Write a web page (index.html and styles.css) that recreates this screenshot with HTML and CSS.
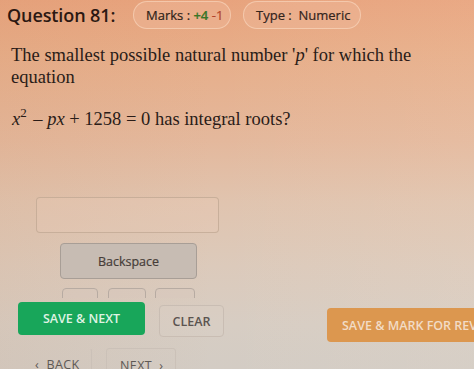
FILE: index.html
```html
<!DOCTYPE html>
<html lang="en">
<head>
<meta charset="utf-8">
<title>Question 81</title>
<link rel="stylesheet" href="styles.css">
</head>
<body>
<div class="page">
  <header class="header">
    <h1 class="title">Question 81:</h1>
    <div class="pill pill-marks"><span>Marks : <span class="plus">+4</span> <span class="minus">-1</span></span></div>
    <div class="pill pill-type"><span>Type :&nbsp; Numeric</span></div>
  </header>

  <section class="question">
    <p class="q-line">The smallest possible natural number '<i>p</i>' for which the equation</p>
    <p class="q-eq"><i>x</i><sup>2</sup> – <i>px</i> + 1258 = 0 has integral roots?</p>
  </section>

  <div class="answer"></div>
  <button class="backspace">Backspace</button>
  <div class="keys">
    <span class="key k1"></span>
    <span class="key k2"></span>
    <span class="key k3"></span>
  </div>

  <div class="actions">
    <button class="btn btn-save">SAVE &amp; NEXT</button>
    <button class="btn btn-clear">CLEAR</button>
    <button class="btn btn-mark">SAVE &amp; MARK FOR REVIEW</button>
  </div>

  <nav class="nav">
    <button class="nav-btn nav-back">&lsaquo;&nbsp; BACK</button>
    <button class="nav-btn nav-next">NEXT &nbsp;&rsaquo;</button>
  </nav>
</div>
</body>
</html>
```

FILE: styles.css
```css
* { box-sizing: border-box; }
html, body { margin: 0; padding: 0; }
body {
  width: 474px;
  height: 369px;
  overflow: hidden;
  font-family: "Open Sans", "Noto Sans", sans-serif;
  background:
    linear-gradient(90deg, rgba(200,140,100,0.10) 0%, rgba(255,255,255,0) 45%, rgba(255,240,225,0.08) 100%),
    linear-gradient(180deg, #e8a37d 0%, #e7ad88 14%, #e4b89c 38%, #e0c4af 55%, #dccabb 72%, #d7cdc3 88%, #d3ccc4 100%);
}
.page { width: 474px; height: 369px; overflow: hidden; }

.header {
  display: flex;
  align-items: center;
  padding: 1px 0 0 7px;
  height: 29px;
}
.title {
  margin: 0;
  font-size: 18px;
  font-weight: 600;
  color: #2b1812;
  letter-spacing: -0.1px;
  width: 126px;
  flex-shrink: 0;
}
.pill {
  height: 28px;
  border-radius: 14px;
  border: 1px solid rgba(255, 232, 212, 0.45);
  background: rgba(240, 190, 160, 0.35);
  display: flex;
  align-items: center;
  font-size: 13px;
  font-weight: 500;
  color: #2e1f18;
  white-space: nowrap;
  flex-shrink: 0;
  -webkit-text-stroke: 0.2px currentColor;
}
.pill-marks { width: 98px; padding-left: 12px; }
.pill-type { width: 118px; padding-left: 12px; margin-left: 12px; color: #33241c; }
.plus { color: #3a7628; font-weight: 600; }
.minus { color: #b3452a; }

.question {
  padding-left: 11px;
  margin-top: 15px;
  font-family: "Liberation Serif", "Times New Roman", serif;
  font-size: 18.5px;
  color: #2a1c18;
  line-height: 22px;
}
.q-line { margin: 0; width: 420px; }
.q-eq { margin: 20px 0 0 1px; }
.q-eq sup { font-size: 13px; line-height: 0; vertical-align: 8px; margin-right: 2px; }

.answer {
  margin: 67px 0 0 36px;
  width: 183px;
  height: 36px;
  border: 1px solid rgba(190, 165, 145, 0.7);
  border-radius: 4px;
  background: rgba(235, 205, 185, 0.25);
}
.backspace {
  display: block;
  margin: 10px 0 0 60px;
  width: 137px;
  height: 36px;
  border: 1px solid #a89e96;
  border-radius: 4px;
  background: #c7bcb3;
  font-family: "Open Sans", "Noto Sans", sans-serif;
  font-size: 12.5px;
  font-weight: 500;
  color: #463c38;
  padding: 0;
  -webkit-text-stroke: 0.2px currentColor;
}
.keys {
  display: flex;
  margin: 9px 0 0 62px;
  height: 10px;
  overflow: hidden;
}
.key {
  display: block;
  flex-shrink: 0;
  height: 20px;
  border: 1px solid #b7aba2;
  border-radius: 4px;
  background: rgba(215, 200, 188, 0.3);
}
.k1 { width: 36px; }
.k2 { width: 38px; margin-left: 10px; }
.k3 { width: 40px; margin-left: 9px; }

.actions {
  display: flex;
  align-items: flex-start;
  margin-top: 4px;
  height: 42px;
}
.btn {
  font-family: "Open Sans", "Noto Sans", sans-serif;
  font-size: 12.5px;
  font-weight: 600;
  padding: 0;
  border-radius: 4px;
  white-space: nowrap;
  flex-shrink: 0;
}
.btn-save {
  margin-left: 18px;
  width: 127px;
  height: 33px;
  border: none;
  background: #18a65a;
  color: #dff3e3;
}
.btn-clear {
  margin: 3px 0 0 14px;
  width: 65px;
  height: 32px;
  border: 1px solid #c9bdb3;
  background: rgba(220, 208, 198, 0.3);
  color: #5b5450;
}
.btn-mark {
  margin: 6px 0 0 103px;
  width: 170px;
  height: 34px;
  border: none;
  background: #dc974f;
  color: #f2dcc6;
  text-align: left;
  padding-left: 15px;
}

.nav {
  display: flex;
  margin-top: 4px;
}
.nav-btn {
  font-family: "Open Sans", "Noto Sans", sans-serif;
  font-size: 12.5px;
  color: #5e5955;
  background: transparent;
  padding: 6px 0 0 0;
  height: 26px;
  border: 1px solid #cbc1b8;
  border-radius: 3px;
  text-align: left;
  letter-spacing: 0.4px;
  flex-shrink: 0;
}
.nav-back { width: 92px; padding-left: 34px; border-color: transparent #cbc1b8 transparent transparent; }
.nav-next { width: 70px; margin-left: 14px; padding-left: 13px; padding-top: 8px; }
```
